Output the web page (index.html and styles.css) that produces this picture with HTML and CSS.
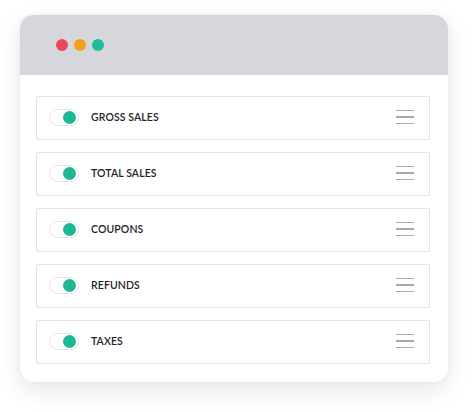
FILE: index.html
```html
<!DOCTYPE html>
<html>
<head>
<meta charset="utf-8">
<link rel="stylesheet" href="styles.css">
</head>
<body>
<div class="window">
  <div class="titlebar">
    <span class="dot red"></span>
    <span class="dot orange"></span>
    <span class="dot green"></span>
  </div>
  <div class="list">
    <div class="row">
      <span class="toggle"><span class="knob"></span></span>
      <span class="label">GROSS SALES</span>
      <span class="handle"><i></i><i></i><i></i></span>
    </div>
    <div class="row">
      <span class="toggle"><span class="knob"></span></span>
      <span class="label">TOTAL SALES</span>
      <span class="handle"><i></i><i></i><i></i></span>
    </div>
    <div class="row">
      <span class="toggle"><span class="knob"></span></span>
      <span class="label">COUPONS</span>
      <span class="handle"><i></i><i></i><i></i></span>
    </div>
    <div class="row">
      <span class="toggle"><span class="knob"></span></span>
      <span class="label">REFUNDS</span>
      <span class="handle"><i></i><i></i><i></i></span>
    </div>
    <div class="row">
      <span class="toggle"><span class="knob"></span></span>
      <span class="label">TAXES</span>
      <span class="handle"><i></i><i></i><i></i></span>
    </div>
  </div>
</div>
</body>
</html>
```
FILE: styles.css
```css
html, body {
  margin: 0;
  padding: 0;
  background: #ffffff;
}
body {
  width: 474px;
  height: 412px;
  font-family: "Lato", "Open Sans", sans-serif;
  padding: 15px 0 0 20px;
  box-sizing: border-box;
}
.window {
  width: 428px;
  height: 367px;
  background: #ffffff;
  border-radius: 14px;
  box-shadow: 0 8px 24px rgba(0, 0, 0, 0.10), 0 0 6px rgba(0, 0, 0, 0.04);
  overflow: hidden;
  display: flex;
  flex-direction: column;
}
.titlebar {
  height: 60px;
  background: #d6d7dc;
  display: flex;
  align-items: center;
  gap: 6px;
  padding-left: 36px;
  flex-shrink: 0;
}
.dot {
  width: 12px;
  height: 12px;
  border-radius: 50%;
  display: block;
}
.red { background: #e8485f; }
.orange { background: #f5a01c; }
.green { background: #1fbc9b; }
.list {
  padding: 21px 18px 0 16px;
  display: flex;
  flex-direction: column;
  gap: 12px;
}
.row {
  height: 44px;
  box-sizing: border-box;
  border: 1px solid #e3e3e5;
  border-radius: 2px;
  display: flex;
  align-items: center;
  padding: 0 15px 2px 12px;
}
.toggle {
  width: 30px;
  height: 17px;
  box-sizing: border-box;
  border: 1px solid #e6e6e8;
  border-radius: 9px;
  background: #fff;
  position: relative;
  display: block;
  flex-shrink: 0;
}
.knob {
  position: absolute;
  right: 2px;
  top: 1px;
  width: 13px;
  height: 13px;
  border-radius: 50%;
  background: #1fb897;
}
.label {
  margin-left: 12px;
  font-size: 10.5px;
  font-weight: 600;
  color: #222226;
  letter-spacing: 0.1px;
  flex: 1;
}
.handle {
  width: 18px;
  display: flex;
  flex-direction: column;
  gap: 5px;
}
.handle i {
  display: block;
  height: 1.5px;
  background: #a9a9ad;
}
```
